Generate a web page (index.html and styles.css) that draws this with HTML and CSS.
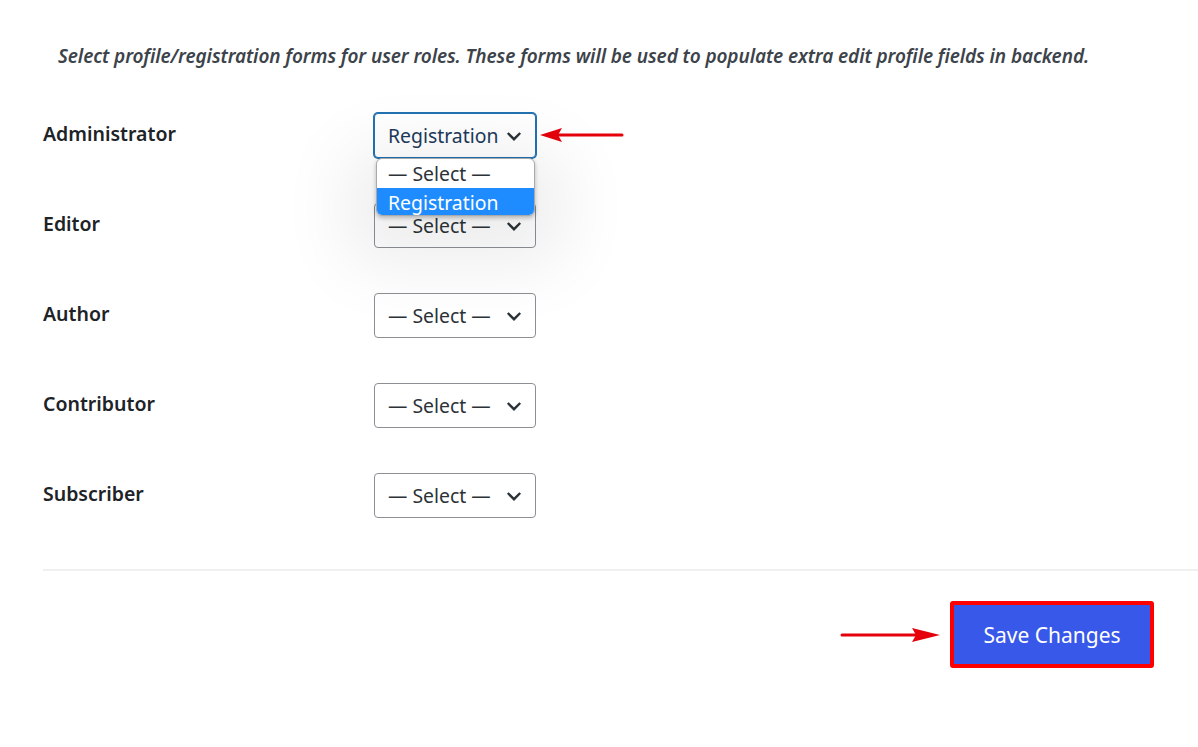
FILE: index.html
```html
<!DOCTYPE html>
<html>
<head>
<meta charset="utf-8">
<link rel="stylesheet" href="styles.css">
</head>
<body>
<div class="page">
  <p class="desc">Select profile/registration forms for user roles. These forms will be used to populate extra edit profile fields in backend.</p>
  <div class="rows">
    <div class="row">
      <div class="label">Administrator</div>
      <div class="field">
        <div class="select focus"><span>Registration</span><svg class="chev" viewBox="0 0 16 16" width="16" height="16"><path d="M1.8 5 L8 11.2 L14.2 5" fill="none" stroke="#2c3338" stroke-width="2.4"/></svg></div>
        <div class="dropdown">
          <div class="opt">— Select —</div>
          <div class="opt hl">Registration</div>
        </div>
        <svg class="arrow-left" viewBox="0 0 84 16" width="84" height="16"><polygon points="0,8 22,1 18,8 22,15" fill="#e5000b"/><line x1="16" y1="8" x2="82" y2="8" stroke="#e5000b" stroke-width="3" stroke-linecap="round"/></svg>
      </div>
    </div>
    <div class="row">
      <div class="label">Editor</div>
      <div class="field"><div class="select"><span>— Select —</span><svg class="chev" viewBox="0 0 16 16" width="16" height="16"><path d="M1.8 5 L8 11.2 L14.2 5" fill="none" stroke="#2c3338" stroke-width="2.4"/></svg></div></div>
    </div>
    <div class="row">
      <div class="label">Author</div>
      <div class="field"><div class="select"><span>— Select —</span><svg class="chev" viewBox="0 0 16 16" width="16" height="16"><path d="M1.8 5 L8 11.2 L14.2 5" fill="none" stroke="#2c3338" stroke-width="2.4"/></svg></div></div>
    </div>
    <div class="row">
      <div class="label">Contributor</div>
      <div class="field"><div class="select"><span>— Select —</span><svg class="chev" viewBox="0 0 16 16" width="16" height="16"><path d="M1.8 5 L8 11.2 L14.2 5" fill="none" stroke="#2c3338" stroke-width="2.4"/></svg></div></div>
    </div>
    <div class="row">
      <div class="label">Subscriber</div>
      <div class="field"><div class="select"><span>— Select —</span><svg class="chev" viewBox="0 0 16 16" width="16" height="16"><path d="M1.8 5 L8 11.2 L14.2 5" fill="none" stroke="#2c3338" stroke-width="2.4"/></svg></div></div>
    </div>
  </div>
  <div class="divider"></div>
  <div class="footer">
    <svg class="arrow-right" viewBox="0 0 100 16" width="100" height="16"><line x1="2" y1="8" x2="80" y2="8" stroke="#e5000b" stroke-width="3" stroke-linecap="round"/><polygon points="100,8 72,1 76,8 72,15" fill="#e5000b"/></svg>
    <div class="btn-frame"><button class="btn">Save Changes</button></div>
  </div>
</div>
</body>
</html>
```
FILE: styles.css
```css
html, body {
  margin: 0;
  padding: 0;
  background: #ffffff;
}
body {
  font-family: "Noto Sans", "Open Sans", sans-serif;
  color: #1d2327;
  width: 1198px;
  height: 747px;
  overflow: hidden;
}
.page {
  padding: 0 0 0 43px;
}
.desc {
  margin: 0;
  padding: 42px 0 0 15px;
  font-size: 19px;
  font-style: italic;
  font-weight: 600;
  color: #3c434a;
  line-height: 28px;
  letter-spacing: -0.1px;
}
.rows {
  margin-top: 43px;
}
.row {
  display: flex;
  align-items: center;
  height: 45px;
  margin-bottom: 45px;
}
.row:last-child {
  margin-bottom: 0;
}
.label {
  width: 331px;
  font-size: 19.5px;
  font-weight: 600;
  color: #1d2327;
  margin-top: -4px;
}
.field {
  position: relative;
}
.select {
  box-sizing: border-box;
  width: 162px;
  height: 45px;
  border: 1px solid #8c8f94;
  border-radius: 4px;
  background: #fff;
  display: flex;
  align-items: center;
  justify-content: space-between;
  padding: 0 13px 0 13px;
  font-size: 19.4px;
  color: #2c3338;
  white-space: nowrap;
}
.select span {
  margin-top: -1px;
}
.select.focus {
  border-color: #2271b1;
  box-shadow: 0 0 0 1px #2271b1;
  color: #1d3a5c;
}
.chev {
  display: block;
  flex: none;
}
.dropdown {
  position: absolute;
  left: 2px;
  top: 45px;
  width: 159px;
  box-sizing: border-box;
  background: #fff;
  border: 1px solid #a7aaad;
  border-radius: 6px;
  overflow: hidden;
  z-index: 5;
  box-shadow: 0 2px 4px rgba(0,0,0,0.25), 0 20px 70px 30px rgba(0,0,0,0.07);
}
.opt {
  height: 29px;
  line-height: 30px;
  padding: 0 11px;
  font-size: 19.4px;
  color: #2c3338;
  white-space: nowrap;
}
.opt.hl {
  background: #1e8cff;
  color: #fff;
  height: 27px;
  line-height: 30px;
}
.arrow-left {
  position: absolute;
  left: 166px;
  top: 14px;
}
.divider {
  height: 2px;
  background: #f0f0f1;
  margin-top: 51px;
}
.footer {
  display: flex;
  justify-content: flex-end;
  align-items: center;
  padding: 30px 44px 0 0;
  gap: 10px;
}
.arrow-right {
  display: block;
}
.btn-frame {
  border: 4px solid #ff0000;
  border-radius: 3px;
  width: 204px;
  height: 67px;
  box-sizing: border-box;
}
.btn {
  width: 100%;
  height: 100%;
  background: #3858e9;
  border: none;
  color: #fff;
  font-family: "Noto Sans", "Open Sans", sans-serif;
  font-size: 21px;
  padding: 0;
  margin: 0;
  display: block;
  cursor: pointer;
}
```
